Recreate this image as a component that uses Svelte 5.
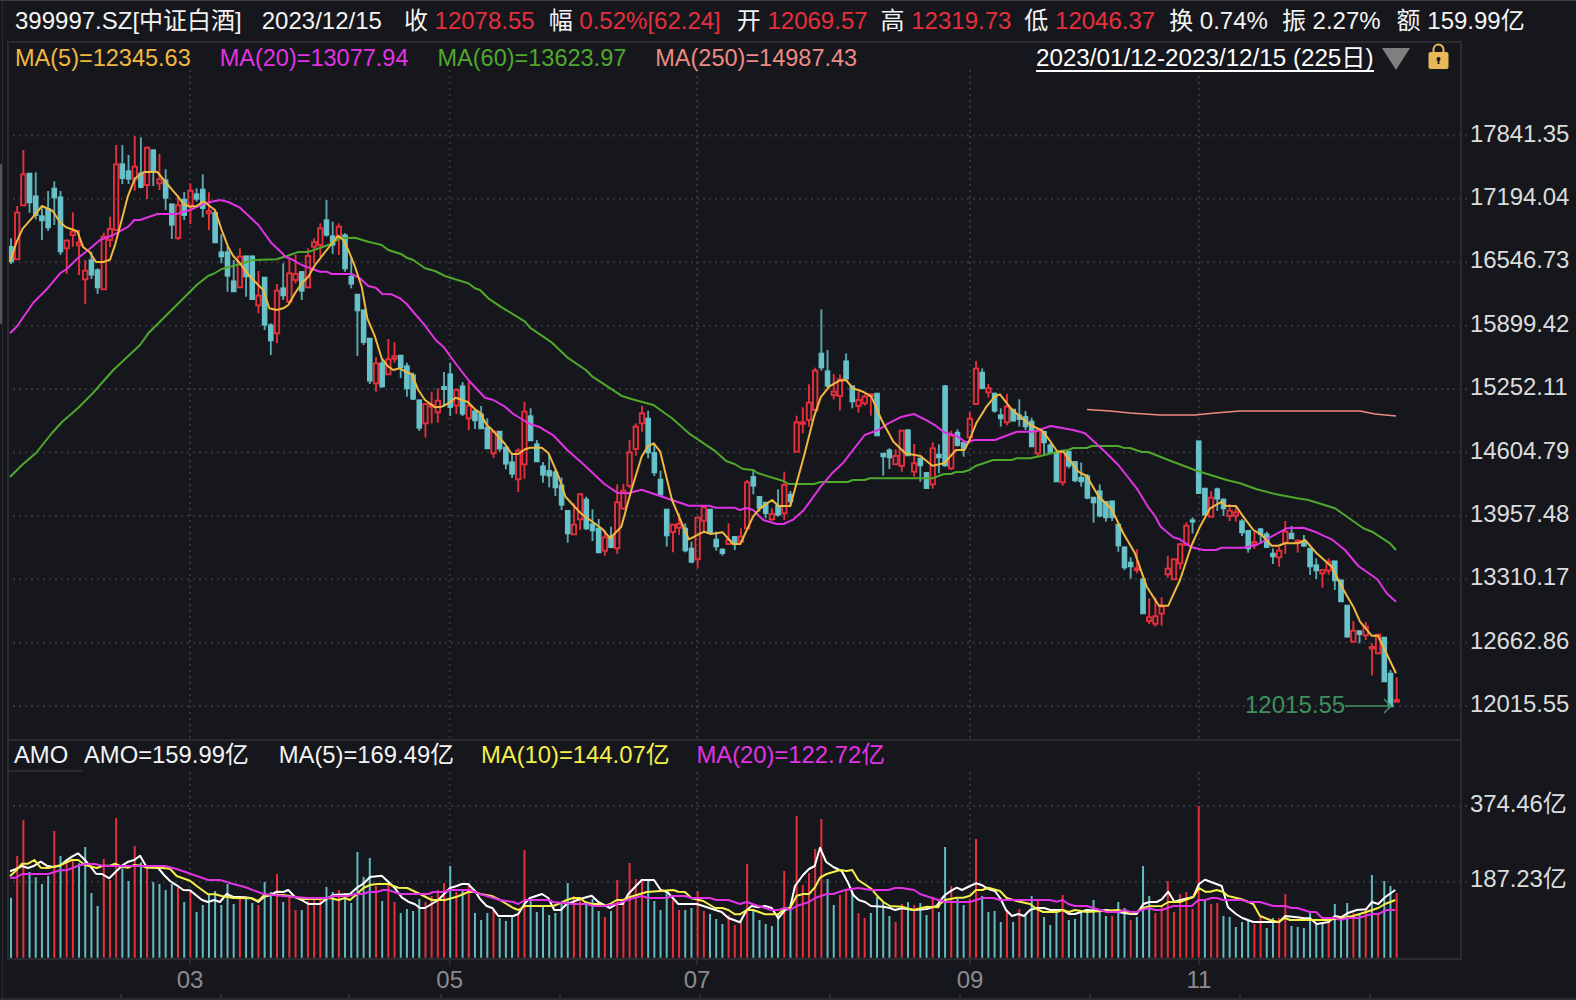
<script>
  // candle rows are read off in blocks: type, body top, body bottom, high, low (crop px, 3x)
  const candleBlocks = [
    { oy: 130, rows: 't 350 395 325 402|r 248 388 228 388|r 133 226 60 226|t 130 218 130 248|t 198 256 127 268|t 258 272 235 330|t 236 293 183 303|t 175 203 154 285|t 201 365 183 375|r 332 355 328 432|r 305 315 247 350|r 338 346 300 435|r 422 448 390 522|t 390 435 365 447|t 420 473 415 492|r 320 478 308 478|r 297 330 260 352|r 103 300 45 300|t 102 145 45 162|t 123 147 75 162|r 110 148 18 182|t 130 172 22 175|r 53 165 50 207|t 60 125 58 168|r 148 160 72 180|t 150 204 118 240|t 222 285 222 327|r 226 324 195 330|t 208 256 186 270|r 182 226 160 282|t 192 207 175 215|t 178 235 133 262|r 243 250 187 300|t 248 338 240 338|t 366 380 312 400|t 366 438 350 485|t 453 485 390 485|r 380 472 355 472|t 378 440 378 500|t 378 508 378 508|r 497 526 423 550|t 442 585 442 600|t 585 632 580 675|r 482 610 462 640|t 474 497 400 510|r 430 515 385 515' },
    { oy: 190, rows: 'r 252 270 195 280|t 245 303 245 330|r 198 292 175 292|r 157 170 145 220|r 115 165 100 200|t 90 135 30 140|t 138 165 95 192|r 110 140 100 195|t 135 236 130 245|t 260 282 200 295|t 313 362 313 498|t 360 457 360 465|t 445 573 445 582|r 520 580 502 605|t 519 590 507 594|r 508 553 447 553|r 499 506 457 518|t 496 533 496 564|t 528 596 518 620|t 555 627 548 630|t 630 714 630 723|r 642 700 642 743|r 645 650 605 700|r 632 667 595 698|t 590 598 546 650|t 552 652 518 678|r 600 647 595 672|t 588 672 576 678|r 647 685 575 720|t 663 692 663 717|t 672 716 648 716|t 712 776 685 776|r 725 790 720 804|t 724 776 724 785|t 772 822 765 838|t 816 852 795 864|r 782 868 775 906|r 665 823 636 866|t 678 752 655 752|t 762 815 750 815|t 828 855 816 878|t 842 858 795 892|t 846 893 838 918|t 885 945 862 960' },
    { oy: 300, rows: 't 632 701 630 728|r 674 703 610 703|r 583 658 580 690|t 598 686 590 690|t 672 692 628 723|t 685 758 657 758|r 712 752 690 767|t 708 742 680 745|r 607 745 553 762|r 572 625 552 630|r 457 557 420 565|r 380 447 370 467|r 340 370 317 395|t 355 458 332 475|t 458 518 430 528|t 538 585 512 585|t 628 707 628 740|r 674 696 672 757|r 672 683 640 705|t 685 752 670 757|t 745 786 725 790|r 653 778 650 805|r 622 662 617 695|t 628 700 628 700|t 718 740 695 752|t 748 760 745 767|r 720 732 670 735|t 710 732 708 750|r 710 725 685 725|r 547 685 540 685|t 530 558 508 583|t 590 625 590 635|t 607 640 607 655|r 642 658 625 662|t 617 645 568 650|r 555 640 515 660|t 583 605 573 620|r 367 455 347 455|r 367 370 322 400|r 308 360 253 380|r 212 330 203 332|t 160 203 28 212|t 213 258 150 265|r 275 285 222 298|r 238 288 223 332|t 183 237 160 237|t 258 305 258 325|r 300 318 275 338|r 290 310 283 317|r 283 285 280 347|t 280 407 280 407|t 460 470 460 527|t 450 473 445 507|r 468 493 448 493|r 392 498 392 515|t 390 467 388 467|r 490 515 432 530|t 475 497 472 545|t 518 565 518 565|r 445 553 427 566|t 463 473 433 520|t 258 497 255 500|r 407 505 392 510|t 397 436 388 440|t 428 445 425 470|r 356 412 335 420|r 206 312 183 312|t 217 265 205 268|r 265 277 252 293|t 280 333 278 338|t 345 356 325 380|r 320 367 282 376|t 328 363 328 363|t 345 358 298 380|t 350 380 333 390|t 364 440 353 440|r 392 460 385 470|t 395 428 392 465|t 435 457 430 460|t 460 545 455 545' },
    { oy: 430, rows: 'r 65 157 65 167|t 65 108 65 115|t 95 152 95 157|t 142 155 98 170|t 138 204 132 208|t 202 218 202 278|t 183 258 163 262|t 215 263 215 275|t 213 262 213 273|t 283 347 283 365|t 351 413 351 420|t 397 410 382 446|r 415 420 358 430|t 447 551 447 551|r 562 573 505 582|r 559 581 502 590|r 530 551 502 587|r 416 433 378 443|r 388 448 388 448|r 343 400 338 418|r 287 345 277 345|t 270 276 262 310|t 33 190 33 190|t 175 255 175 255|r 203 260 183 262|t 177 207 173 243|t 208 236 205 258|r 242 258 222 273|r 247 257 228 275' },
    { oy: 500, rows: 't 63 98 57 108|t 92 146 92 158|r 126 133 95 147|t 87 103 84 132|t 102 142 95 143|t 160 170 145 192|r 152 172 140 200|r 95 128 63 162|t 100 116 78 116|r 122 128 118 158|t 127 138 105 141|t 145 200 145 225|t 195 212 175 237|r 210 220 210 263|r 185 212 175 224|t 183 242 183 270|t 240 305 240 305|t 316 411 316 411|r 392 425 363 425|t 393 403 390 430|r 380 406 366 420|r 441 445 430 527|r 404 460 404 460|t 412 545 412 545|t 520 620 510 620|r 600 605 532 607' }
  ];

  const barX = (i) => 11 + 6.186 * i;

  const candles = candleBlocks.flatMap((block) =>
    block.rows.split('|').map((row) => {
      const [kind, top, bottom, high, low] = row.split(' ');
      const y = (v) => block.oy + Number(v) / 3;
      return { kind, top: y(top), bottom: y(bottom), high: y(high), low: y(low) };
    })
  ).map((c, i) => ({ ...c, x: barX(i) }));

  // volume bar tops, crop px from y=800
  const volumes = 't293 r168 r60 t216 t232 t252 t228 r93 t168 r190 r182 t190 t141 t279 t318 r177 r240 r54 t205 t243 r138 t187 r200 t246 t252 t270 t252 r262 t306 r273 t336 t315 t285 t273 t315 t252 t312 r295 t295 t309 r315 t246 t276 r222 t306 r285 r330 t330 r303 r300 r297 t261 t276 r270 t285 t309 t156 t231 t174 r258 t303 r255 r306 t339 t327 t333 t297 r306 r288 r270 r249 t198 r276 t270 r255 t339 t360 t339 r330 t354 t363 t350 r345 r150 t300 t336 t318 t345 t339 t312 t249 r288 r300 t306 t297 t333 r351 t333 r240 r300 r189 r237 r243 t243 t303 t330 t275 r300 r330 t330 t324 r273 r333 t342 t357 t372 r345 r375 r360 r192 t330 t360 t372 t378 t345 r213 t330 r48 r255 r219 r147 r57 t237 t315 r285 r270 t275 r339 r354 t339 t291 t306 t348 r366 r312 t306 r315 t309 t345 r297 t336 t141 r258 t297 t315 r297 r117 t288 t336 t333 t366 r330 t366 r327 t345 t288 r300 t351 t375 t336 r285 t360 t357 t333 t330 t300 t333 t348 r348 t306 t324 r360 t351 t198 t288 r339 r318 r243 r336 r282 r276 r327 r18 t300 r312 r309 t348 t351 t381 t366 t360 r372 r351 t384 t354 r354 r282 t378 t381 t384 t336 t372 t366 r360 t312 t354 t309 r339 t345 r327 t225 r345 t243 t258 r279'
    .split(' ')
    .map((v, i) => ({ kind: v[0], x: barX(i), top: 800 + Number(v.slice(1)) / 3 }));

  function pts(ox, oy, sx, text) {
    return text.split(' ').map((p) => {
      const [x, y] = p.split(',').map(Number);
      return `${(ox + x / sx).toFixed(1)},${(oy + y / 3).toFixed(1)}`;
    }).join(' ');
  }

  const ma5 = [
    pts(0, 130, 3, '30,395 50,335 68,296 100,260 126,228 158,243 180,277 198,292 232,304 250,352 268,365 288,396 310,396 330,389 345,345 365,270 383,200 405,145 432,126 472,126 500,160 534,200 550,222 570,230 590,228 610,214 645,240 665,300 685,352 700,378 720,400 750,440 790,480 808,535 830,540 850,535'),
    pts(285, 190, 3, '10,345 30,310 50,280 70,260 90,225 125,180 160,137 175,150 190,180 210,230 230,290 247,385 270,440 290,505 310,530 325,540 345,535 365,547 380,552 400,600 420,630 450,652 470,650 490,640 512,623 548,636 570,658 585,668 605,705 620,718 660,762 680,792 700,792 720,778'),
    pts(530, 300, 2.958, '0,443 35,443 55,460 85,530 105,590 150,640 215,688 237,715 270,680 300,570 330,470 348,440 366,430 385,455 420,600 445,660 470,718 515,695 535,702 570,697 600,732 622,732 660,650 680,625 716,600 735,618 770,618 810,470 840,350 860,292 885,260 915,242 935,240 955,265 985,275 1010,290 1040,360 1075,425 1110,460 1155,468 1190,497 1225,490 1260,450 1285,450 1300,420 1320,370 1350,320 1375,290 1390,283 1425,328 1450,350 1480,375 1515,392 1540,425 1560,455'),
    pts(1040, 430, 3, '70,65 100,105 115,125 140,138 175,198 215,238 250,310 285,370 320,470 357,527 385,527 420,450 455,345 480,290 510,235 545,215'),
    pts(1220, 500, 3, '15,17 48,18 70,50 100,90 125,105 155,137 175,137 195,130 233,130 255,120 290,160 335,200 365,260 400,320 420,365 455,407 474,407 528,520')
  ].join(' ');

  const ma20 = [
    pts(0, 130, 3, '30,610 50,590 100,518 140,478 180,430 200,417 235,383 265,360 300,330 340,315 385,290 403,270 420,270 472,252 530,252 570,240 620,218 660,210 685,216 720,233 775,285 815,340 850,373'),
    pts(285, 190, 3, '0,200 20,208 50,225 105,245 125,245 140,252 200,252 225,265 250,288 272,293 292,312 320,313 345,325 365,342 390,372 415,400 452,450 475,470 515,525 550,570 600,623 625,630 660,650 685,672 715,690'),
    pts(530, 300, 2.958, '0,372 30,382 70,407 110,450 150,485 220,552 258,578 290,580 330,569 400,593 470,617 530,617 550,623 605,623 620,630 640,624 660,630 690,660 730,672 750,672 780,658 810,630 860,560 895,518 925,490 990,405 1030,390 1060,370 1095,352 1135,342 1175,362 1200,377 1225,397 1260,407 1290,427 1315,420 1375,420 1440,395 1490,395 1540,378'),
    pts(1040, 430, 3, '100,0 135,10 195,65 235,105 290,175 325,232 345,258 362,290 400,322 420,328 455,352 490,360 528,360 545,353 600,353'),
    pts(1220, 500, 3, '70,143 110,135 145,115 200,85 250,83 285,95 310,107 335,118 375,150 415,198 472,238 500,280 528,305')
  ].join(' ');

  const ma60 = [
    '10,477 22,465 36,453 52,433 62,422 78,408 93,393',
    pts(0, 130, 3, '340,720 420,645 445,610 590,465 625,437 640,432 665,417 730,400 755,390 830,388 850,381'),
    pts(285, 190, 3, '0,200 40,186 70,186 130,165 165,145 210,143 250,155 290,165 310,180 350,193 365,203 385,210 420,235 450,243 480,258 510,268 550,280 570,295 585,300 610,325 650,352 720,395'),
    pts(530, 300, 2.958, '0,83 65,128 110,172 165,210 185,230 270,287 300,297 365,315 420,355 470,400 550,455 580,483 605,492 630,507 660,510 675,520 750,543 765,552 840,552 860,546 940,546 955,540 990,540 1005,535 1190,535 1225,522 1245,522 1260,516 1280,516 1300,510 1320,497 1370,480 1425,480 1440,475 1480,475 1510,468 1568,453'),
    pts(1040, 430, 3, '85,60 100,54 140,54 155,48 235,48 250,53 270,54 305,66 325,66 385,90 470,122 560,150 600,160'),
    '1256,489 1275,494 1296,498',
    pts(1220, 500, 3, '265,0 345,25 430,85 460,97 510,130 528,150')
  ].join(' ');

  const ma250 = '1087,409.5 1110,411 1130,413 1160,415 1195,415 1215,413 1240,411 1360,411 1375,414 1396,416';

  const amoMa5 = [
    pts(0, 800, 3, '30,214 48,207 66,198 84,204 103,197 122,185 140,197 160,201 180,197 198,182 216,170 234,160 252,177 270,198 288,221 306,222 328,235 347,215 366,197 385,185 403,180 420,167 438,198 456,202 475,204 492,225 510,243 530,256 550,270 570,271 590,287 606,300 624,306 643,300 660,306 680,282 700,291 718,291 736,292 755,295 775,306 792,290 812,285 830,275 850,276 865,270 885,291 905,300 925,312 960,312 980,296 1000,285 1050,282 1070,264 1090,251 1110,231 1145,227 1165,245 1185,265 1205,292 1225,305 1245,313 1260,324 1275,324 1295,312 1315,300 1335,279 1350,264 1370,258 1385,252 1405,252'),
    pts(470, 800, 3, '0,258 15,273 30,297 50,318 68,325 85,348 130,348 145,342 165,310 180,294 198,288 216,282 235,294 253,330 272,330 290,312 308,306 330,297 365,287 385,306 420,324 440,312 458,312 475,282 515,240 552,240 572,270 592,276 625,312 680,312 700,318 720,325 755,336 775,354 810,367 830,330 845,318 865,322 885,318 905,324 925,355 945,330 960,325 975,258 999,225 1017,207 1034,198 1050,143 1068,185 1090,201 1115,213 1135,250 1150,285 1166,300 1185,306 1203,318 1240,320 1260,324 1275,330 1295,325 1333,330 1370,327 1400,318'),
    pts(940, 800, 3, '0,303 15,285 34,272 50,263 66,270 90,258 108,250 127,256 145,267 165,273 182,297 198,330 216,348 235,342 252,348 270,330 290,324 312,324 331,330 368,330 387,342 405,342 440,330 480,333 498,330 535,336 572,342 590,342 610,312 628,306 650,306 665,298 685,275 703,305 721,300 760,291 777,252 795,239 845,258 864,322 888,342 907,354 940,366 1018,366 1036,348 1072,352 1092,355 1110,355 1130,372 1166,366 1185,348 1203,352 1222,340 1250,330 1278,328 1296,306 1315,312 1335,292 1366,270')
  ].join(' ');

  const amoMa10 = [
    pts(0, 800, 3, '30,228 48,212 66,191 84,191 103,180 122,203 145,204 180,196 215,180 235,180 255,195 290,204 310,197 330,197 345,191 366,200 385,203 403,195 425,197 440,203 480,203 510,206 530,228 570,242 590,258 624,283 645,283 665,288 700,294 755,295 775,303 790,288 810,285 850,285 885,291 905,297 960,297 990,294 1015,300 1035,294 1050,300 1070,283 1090,264 1110,255 1130,252 1165,252 1195,263 1222,264 1260,282 1295,300 1335,300 1370,290 1405,276'),
    pts(470, 800, 3, '0,276 15,275 30,282 65,288 90,300 110,312 130,324 145,330 165,318 250,318 270,310 290,300 310,294 330,294 345,306 365,312 385,312 405,318 420,312 440,300 460,300 480,291 530,276 570,273 610,270 625,275 645,276 665,295 700,303 735,324 757,324 775,330 795,343 810,343 830,330 850,330 885,343 925,343 945,325 960,325 980,287 1000,282 1017,282 1034,263 1050,233 1070,222 1110,210 1130,213 1147,210 1165,240 1205,267 1222,288 1240,306 1260,318 1296,320 1330,330 1370,320 1405,322'),
    pts(940, 800, 3, '0,312 15,300 50,293 70,293 90,287 108,270 127,270 145,263 180,273 200,294 230,303 270,312 290,327 310,336 350,336 368,330 387,336 405,330 440,336 535,330 572,340 590,336 610,324 628,319 665,318 685,306 720,306 760,291 777,264 795,275 810,275 830,270 850,276 864,288 905,298 940,312 960,348 990,360 1015,366 1035,354 1050,360 1166,360 1203,354 1240,348 1278,336 1315,324 1335,312 1366,300')
  ].join(' ');

  const amoMa20 = [
    pts(0, 800, 3, '30,233 48,233 66,222 145,222 180,211 200,211 235,197 255,192 285,192 310,198 440,198 495,198 530,207 625,240 660,240 700,252 735,261 790,282 850,288 885,291 925,294 985,294 1000,288 1045,288 1065,282 1090,282 1105,276 1130,276 1150,270 1165,270 1200,282 1285,282 1300,276 1330,276 1350,270 1405,270'),
    pts(470, 800, 3, '0,270 30,282 70,294 90,300 130,306 145,312 165,300 235,300 250,306 310,312 350,312 370,318 400,318 440,312 480,297 515,288 535,294 590,294 605,288 645,288 665,294 720,294 740,300 775,300 810,312 830,306 865,318 905,330 925,330 945,324 960,330 980,318 1017,306 1035,294 1070,282 1090,282 1125,270 1165,264 1205,270 1255,270 1275,264 1295,264 1333,270 1350,282 1405,300'),
    pts(940, 800, 3, '0,300 15,306 90,306 108,300 127,294 160,294 180,300 330,300 350,305 368,300 385,312 405,318 440,318 460,324 480,330 500,336 535,336 555,330 570,336 590,336 605,330 625,324 645,330 665,330 700,318 755,318 775,300 795,300 815,294 830,294 850,300 905,300 925,306 960,306 1000,318 1035,318 1055,324 1072,324 1110,336 1128,336 1147,354 1185,354 1203,360 1222,354 1255,354 1296,342 1315,342 1340,330 1366,330')
  ].join(' ');

  const months = [
    { label: '03', x: 190 },
    { label: '05', x: 449.7 },
    { label: '07', x: 697 },
    { label: '09', x: 970 },
    { label: '11', x: 1199 }
  ];

  const footTicks = [121, 221, 349, 441, 560, 700, 830, 960, 1090, 1240, 1370];

  const priceTicks = ['17841.35', '17194.04', '16546.73', '15899.42', '15252.11', '14604.79', '13957.48', '13310.17', '12662.86', '12015.55']
    .map((label, i) => ({ label, y: 135.4 + 63.41 * i }));

  const amoTicks = [
    { label: '374.46亿', y: 806 },
    { label: '187.23亿', y: 881.7 }
  ];

  const quote = [
    { label: '收', value: '12078.55' },
    { label: '幅', value: '0.52%[62.24]' },
    { label: '开', value: '12069.57' },
    { label: '高', value: '12319.73' },
    { label: '低', value: '12046.37' },
    { label: '换', value: '0.74%', plain: true },
    { label: '振', value: '2.27%', plain: true },
    { label: '额', value: '159.99亿', plain: true }
  ];
</script>

<div class="screen">
  <header class="quote-bar">
    <span class="symbol">399997.SZ[中证白酒]</span>
    <span class="trade-date">2023/12/15</span>
    {#each quote as item}
      <span class="quote-item">{item.label} <b class:up={!item.plain}>{item.value}</b></span>
    {/each}
  </header>

  <section class="pane price-pane">
    <svg class="pane-svg" viewBox="0 42 1576 698" width="1576" height="698" aria-hidden="true">
      {#each months as m}
        <line class="grid" x1={m.x} x2={m.x} y1="70" y2="738" />
      {/each}
      {#each priceTicks as t}
        <line class="grid" x1="7" x2="1468" y1={t.y} y2={t.y} />
        <text class="axis-label" x="1470" y={t.y + 6.2}>{t.label}</text>
      {/each}

      {#each candles as c}
        <g class={c.kind === 'r' ? 'rise' : 'fall'}>
          <line class="wick" x1={c.x} x2={c.x} y1={c.high} y2={c.top} />
          <line class="wick" x1={c.x} x2={c.x} y1={c.bottom} y2={c.low} />
          <rect class="body" x={c.x - 2.2} y={c.top} width="4.4" height={Math.max(c.bottom - c.top, 1.5)} />
        </g>
      {/each}

      <polyline class="ma ma-60" points={ma60} />
      <polyline class="ma ma-20" points={ma20} />
      <polyline class="ma ma-5" points={ma5} />
      <polyline class="ma ma-250" points={ma250} />

      <text class="low-mark" x="1245" y="713">12015.55</text>
      <path class="low-arrow" d="M1345 706H1391M1384 699l7 7-7 7" />
    </svg>

    <div class="legend">
      <span class="ma-5-text">MA(5)=12345.63</span>
      <span class="ma-20-text">MA(20)=13077.94</span>
      <span class="ma-60-text">MA(60)=13623.97</span>
      <span class="ma-250-text">MA(250)=14987.43</span>
      <div class="range">
        <span class="range-text">2023/01/12-2023/12/15 (225日)</span>
        <svg class="range-caret" viewBox="0 0 28 22" width="28" height="22" aria-hidden="true">
          <path d="M0 0H28L14 22Z" fill="#7f7f7f" />
        </svg>
        <svg class="lock" viewBox="0 0 21 26" width="21" height="26" aria-hidden="true">
          <path d="M5.5 10V6.5a5 5 0 0 1 10 0V10" fill="none" stroke="#e8b75a" stroke-width="2" />
          <rect x="0.5" y="9" width="20" height="17" rx="2" fill="#e8b75a" />
          <circle cx="10.5" cy="16" r="2" fill="#15171c" />
          <rect x="9.6" y="16" width="1.8" height="5" fill="#15171c" />
        </svg>
      </div>
    </div>
  </section>

  <section class="pane amo-pane">
    <svg class="pane-svg" viewBox="0 740 1576 220" width="1576" height="220" aria-hidden="true">
      {#each months as m}
        <line class="grid" x1={m.x} x2={m.x} y1="772" y2="958" />
      {/each}
      {#each amoTicks as t}
        <line class="grid" x1="7" x2="1468" y1={t.y} y2={t.y} />
        <text class="axis-label" x="1470" y={t.y + 5.7}>{t.label}</text>
      {/each}
      {#each volumes as v}
        <line class="vol" class:vol-up={v.kind === 'r'} x1={v.x} x2={v.x} y1={v.top} y2="957.7" />
      {/each}
      <polyline class="ma amo-5" points={amoMa5} />
      <polyline class="ma amo-10" points={amoMa10} />
      <polyline class="ma amo-20" points={amoMa20} />
    </svg>

    <div class="legend amo-legend">
      <span class="amo-name">AMO</span>
      <span class="amo-value">AMO=159.99亿</span>
      <span>MA(5)=169.49亿</span>
      <span class="amo-10-text">MA(10)=144.07亿</span>
      <span class="amo-20-text">MA(20)=122.72亿</span>
    </div>
  </section>

  <footer class="month-axis">
    <svg class="pane-svg" viewBox="0 960 1576 40" width="1576" height="40" aria-hidden="true">
      {#each months as m}
        <line class="tick" x1={m.x} x2={m.x} y1="960" y2="965" />
        <text class="month-label" x={m.x} y="988">{m.label}</text>
      {/each}
      {#each footTicks as x}
        <line class="tick" x1={x} x2={x} y1="994" y2="998" />
      {/each}
    </svg>
  </footer>
</div>

<style>
  :global(body) {
    margin: 0;
    background: #15171c;
  }

  .screen {
    width: 1576px;
    height: 1000px;
    box-sizing: border-box;
    overflow: hidden;
    position: relative;
    background: #15171c;
    color: #f4f4f4;
    font-family: "Liberation Sans", "Noto Sans CJK SC", sans-serif;
    font-size: 24px;
    border-top: 1px solid #3a3b3f;
    border-bottom: 2px solid #2a2b2f;
  }

  /* side rail left of the panes, with its scroll thumb */
  .screen::before {
    content: '';
    position: absolute;
    left: 0;
    top: 163px;
    width: 2px;
    height: 160px;
    background: #55565b;
    z-index: 2;
  }

  .screen::after {
    content: '';
    position: absolute;
    left: 2px;
    top: 0;
    width: 1px;
    height: 100%;
    background: #2a2b2f;
  }

  .quote-bar {
    display: flex;
    align-items: center;
    gap: 14px;
    height: 40px;
    padding-left: 15px;
    white-space: nowrap;
    line-height: 1;
    border-bottom: 1px solid transparent;
  }

  .trade-date {
    margin: 0 8px 0 6px;
  }

  .quote-item b {
    font-weight: 400;
  }

  .quote-item:nth-child(4) {
    margin-right: 2px;
  }

  .quote-item:nth-child(5),
  .quote-item:nth-child(6) {
    margin-right: -1px;
  }

  .quote-item:last-child {
    margin-left: 2px;
  }

  .up {
    color: #e62f3c;
  }

  .pane {
    position: relative;
  }

  .price-pane {
    height: 698px;
  }

  .amo-pane {
    height: 220px;
  }

  .month-axis {
    position: relative;
    height: 37px;
  }

  .pane-svg {
    display: block;
    position: absolute;
    left: 0;
    top: 0;
  }

  .price-pane::after,
  .amo-pane::after {
    content: '';
    position: absolute;
    left: 7px;
    top: -1px;
    width: 1455px;
    height: calc(100% + 1px);
    box-sizing: border-box;
    border: solid #2a2b2f;
    border-width: 2px 2px 0 2px;
    pointer-events: none;
  }

  .amo-pane::after {
    border-bottom-width: 2px;
  }

  .legend {
    position: absolute;
    left: 15px;
    right: 0;
    top: 0;
    height: 32px;
    display: flex;
    align-items: center;
    gap: 29px;
    font-size: 23.5px;
    white-space: nowrap;
    z-index: 1;
  }

  .ma-5-text { color: #f1b83f; }
  .ma-20-text { color: #e133e4; }
  .ma-60-text { color: #4fa82c; }
  .ma-250-text { color: #ee8a83; }

  .range {
    position: absolute;
    left: 1021px;
    top: 0;
    height: 100%;
    display: flex;
    align-items: center;
    color: #fff;
  }

  .range-text {
    font-size: 24.2px;
    line-height: 25px;
    margin-top: 1px;
    border-bottom: 2px solid #fff;
  }

  .range-caret {
    margin-left: 8px;
    margin-top: 2px;
  }

  .lock {
    margin-left: 18px;
    margin-top: -5px;
  }

  .amo-legend {
    left: 14px;
    top: 0;
    height: 30px;
    gap: 27px;
    align-items: baseline;
    font-size: 23.8px;
    line-height: 30px;
  }

  .amo-name {
    width: 53px;
    margin-right: -10px;
    position: relative;
  }

  .amo-name::after {
    content: '';
    position: absolute;
    left: -6px;
    right: -16px;
    bottom: -2px;
    height: 2px;
    background: #2a2b2f;
  }

  .amo-value {
    margin-right: 3px;
  }

  .amo-10-text { color: #f5ef4a; }
  .amo-20-text { color: #e133e4; }

  .grid {
    stroke: #34363b;
    stroke-width: 2;
    stroke-dasharray: 2 4;
  }

  .wick {
    stroke-width: 1.9;
  }

  .rise .wick {
    stroke: #e62f3c;
  }

  .fall .wick {
    stroke: #5aa9b0;
  }

  .rise .body {
    fill: none;
    stroke: #e62f3c;
    stroke-width: 1.9;
  }

  .fall .body {
    fill: #67c2c9;
    stroke: #67c2c9;
    stroke-width: 1.2;
  }

  .vol {
    stroke: #62bcc3;
    stroke-width: 2;
  }

  .vol-up {
    stroke: #e62f3c;
  }

  .ma {
    fill: none;
    stroke-width: 2;
    stroke-linejoin: round;
  }

  .ma-5 { stroke: #f1b83f; }
  .ma-20 { stroke: #e133e4; }
  .ma-60 { stroke: #4fa82c; }
  .ma-250 { stroke: #ee8a83; stroke-width: 1.6; }
  .amo-5 { stroke: #fff; }
  .amo-10 { stroke: #f5ef4a; }
  .amo-20 { stroke: #e133e4; }

  .axis-label {
    fill: #dcdcdc;
    font-size: 24px;
    letter-spacing: -0.1px;
  }

  .low-mark {
    fill: #3f8f5f;
    font-size: 24px;
  }

  .low-arrow {
    fill: none;
    stroke: #3f8f5f;
    stroke-width: 1.5;
  }

  .tick {
    stroke: #2a2b2f;
    stroke-width: 2;
  }

  .month-label {
    fill: #8b8b8f;
    font-size: 24px;
    text-anchor: middle;
  }
</style>
